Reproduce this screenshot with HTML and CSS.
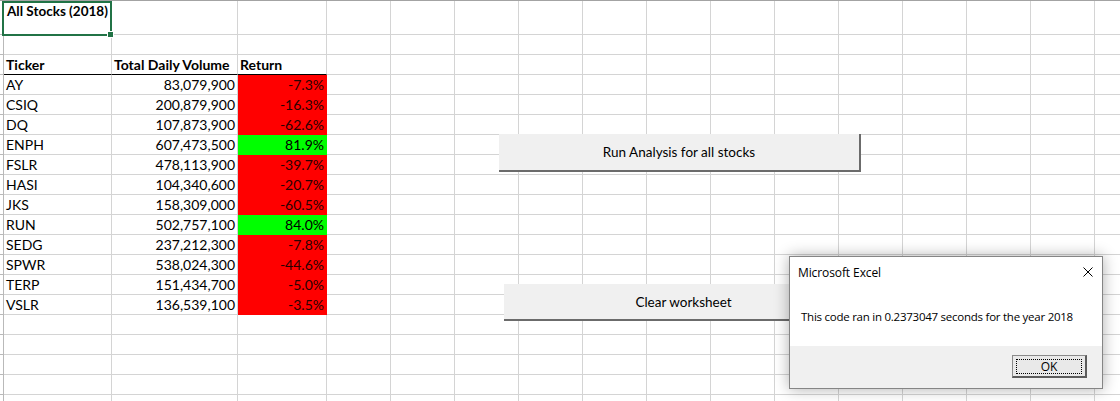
FILE: index.html
```html
<!DOCTYPE html>
<html lang="en">
<head>
<meta charset="utf-8">
<title>All Stocks (2018)</title>
<link rel="stylesheet" href="styles.css">
</head>
<body>
<div class="sheet">
  <div class="c h"></div><div class="c a1">All Stocks (2018)</div><div class="c"></div><div class="c"></div><div class="c r"></div>
  <div class="c h"></div><div class="c"></div><div class="c"></div><div class="c"></div><div class="c r"></div>
  <div class="c h"></div><div class="c hd">Ticker</div><div class="c hd">Total Daily Volume</div><div class="c hd">Return</div><div class="c r"></div>

  <div class="c h"></div><div class="c">AY</div><div class="c num">83,079,900</div><div class="c num neg">-7.3%</div><div class="c r"></div>
  <div class="c h"></div><div class="c">CSIQ</div><div class="c num">200,879,900</div><div class="c num neg">-16.3%</div><div class="c r"></div>
  <div class="c h"></div><div class="c">DQ</div><div class="c num">107,873,900</div><div class="c num neg">-62.6%</div><div class="c r"></div>
  <div class="c h"></div><div class="c">ENPH</div><div class="c num">607,473,500</div><div class="c num pos">81.9%</div><div class="c r"></div>
  <div class="c h"></div><div class="c">FSLR</div><div class="c num">478,113,900</div><div class="c num neg">-39.7%</div><div class="c r"></div>
  <div class="c h"></div><div class="c">HASI</div><div class="c num">104,340,600</div><div class="c num neg">-20.7%</div><div class="c r"></div>
  <div class="c h"></div><div class="c">JKS</div><div class="c num">158,309,000</div><div class="c num neg">-60.5%</div><div class="c r"></div>
  <div class="c h"></div><div class="c">RUN</div><div class="c num">502,757,100</div><div class="c num pos">84.0%</div><div class="c r"></div>
  <div class="c h"></div><div class="c">SEDG</div><div class="c num">237,212,300</div><div class="c num neg">-7.8%</div><div class="c r"></div>
  <div class="c h"></div><div class="c">SPWR</div><div class="c num">538,024,300</div><div class="c num neg">-44.6%</div><div class="c r"></div>
  <div class="c h"></div><div class="c">TERP</div><div class="c num">151,434,700</div><div class="c num neg">-5.0%</div><div class="c r"></div>
  <div class="c h"></div><div class="c">VSLR</div><div class="c num">136,539,100</div><div class="c num neg">-3.5%</div><div class="c r"></div>

  <div class="c h"></div><div class="c"></div><div class="c"></div><div class="c"></div><div class="c r"></div>
  <div class="c h"></div><div class="c"></div><div class="c"></div><div class="c"></div><div class="c r"></div>
  <div class="c h"></div><div class="c"></div><div class="c"></div><div class="c"></div><div class="c r"></div>
  <div class="c h"></div><div class="c"></div><div class="c"></div><div class="c"></div><div class="c r"></div>
  <div class="c h"></div><div class="c"></div><div class="c"></div><div class="c"></div><div class="c r"></div>
</div>

<button class="btn btn-run">Run Analysis for all stocks</button>
<button class="btn btn-clear">Clear worksheet</button>

<div class="dialog">
  <div class="dlg-title">
    <span>Microsoft Excel</span>
    <svg class="close" width="10" height="10" viewBox="0 0 10 10"><path d="M0.5 0.5 L9.5 9.5 M9.5 0.5 L0.5 9.5" stroke="#000" stroke-width="1" fill="none"/></svg>
  </div>
  <div class="dlg-body">This code ran in 0.2373047 seconds for the year 2018</div>
  <div class="dlg-foot"><button class="ok"><span class="ok-label">OK</span></button></div>
</div>
</body>
</html>
```

FILE: styles.css
```css
html, body {
  margin: 0;
  padding: 0;
}

body {
  width: 1120px;
  height: 401px;
  overflow: hidden;
  position: relative;
  background: #fff;
  font-family: "Lato", "Carlito", sans-serif;
  color: #000;
}

.sheet {
  display: grid;
  grid-template-columns: 4px 108px 126px 89px 1fr;
  grid-template-rows: 34px;
  grid-auto-rows: 20px;
  border-top: 1px solid #a3a3a3;
}

.c {
  box-sizing: border-box;
  border-right: 1px solid #d4d4d4;
  border-bottom: 1px solid #d4d4d4;
  display: flex;
  align-items: flex-end;
  padding: 0 2px 1px 2px;
  font-size: 14px;
  line-height: 17px;
  white-space: nowrap;
}

.h {
  padding: 0;
  border-right-color: #b9b9b9;
  border-bottom-color: #b9b9b9;
}

.r {
  padding: 0;
  border-right: none;
  background: repeating-linear-gradient(to right, transparent 0 63px, #d4d4d4 63px 64px);
}

.a1 {
  position: relative;
  align-items: flex-start;
  padding-top: 2px;
  padding-left: 3px;
  font-size: 13.5px;
  font-weight: bold;
}

.a1::before {
  content: "";
  position: absolute;
  left: -2px;
  top: 0;
  width: 110px;
  height: 35px;
  box-sizing: border-box;
  border: 2px solid #217346;
}

.a1::after {
  content: "";
  position: absolute;
  left: 104px;
  top: 31px;
  width: 5px;
  height: 5px;
  background: #217346;
  box-shadow: 0 0 0 1px #fff;
}

.hd {
  font-weight: bold;
  border-bottom-color: #000;
}

.num {
  justify-content: flex-end;
}

.neg {
  background: #ff0000;
  border-color: #ff0000;
  color: #2a0000;
}

.pos {
  background: #00ff00;
  border-color: #00ff00;
}

.btn {
  position: absolute;
  margin: 0;
  padding: 0;
  box-sizing: border-box;
  background: #f0f0f0;
  border: none;
  border-right: 2px solid #6b6b6b;
  border-bottom: 2px solid #6b6b6b;
  font-family: "Lato", "Carlito", sans-serif;
  font-size: 13.5px;
  color: #000;
  display: flex;
  align-items: center;
  justify-content: center;
}

.btn-run {
  left: 499px;
  top: 134px;
  width: 362px;
  height: 38px;
}

.btn-clear {
  left: 504px;
  top: 284px;
  width: 361px;
  height: 37px;
}

.dialog {
  position: absolute;
  left: 789px;
  top: 256px;
  width: 314px;
  height: 133px;
  box-sizing: border-box;
  border: 1px solid #858585;
  background: #fff;
  box-shadow: 0 0 14px rgba(0, 0, 0, 0.32);
  display: flex;
  flex-direction: column;
  font-family: "Open Sans", "Noto Sans", sans-serif;
  font-size: 12px;
  color: #000;
}

.dlg-title {
  height: 30px;
  flex: none;
  display: flex;
  align-items: center;
  justify-content: space-between;
  padding: 0 9px 0 8px;
  letter-spacing: -0.1px;
}

.close {
  display: block;
}

.dlg-body {
  flex: 1;
  display: flex;
  align-items: center;
  padding-left: 11px;
  white-space: nowrap;
  font-size: 11.5px;
  letter-spacing: -0.25px;
}

.dlg-foot {
  height: 42px;
  flex: none;
  background: #f0f0f0;
  display: flex;
  justify-content: flex-end;
  align-items: flex-start;
  padding: 9px 15px 0 0;
  box-sizing: border-box;
}

.ok {
  width: 75px;
  height: 23px;
  margin: 0;
  padding: 3px 3px 2px 3px;
  box-sizing: border-box;
  background: #e9e9e9;
  border: 1px solid #8a8a8a;
  border-right: 2px solid #5c5c5c;
  border-bottom: 2px solid #5c5c5c;
  font-family: "Open Sans", "Noto Sans", sans-serif;
  font-size: 12px;
  color: #000;
  display: flex;
}

.ok-label {
  flex: 1;
  display: flex;
  align-items: center;
  justify-content: center;
  outline: 1px dotted #000;
  outline-offset: -1px;
}
```
